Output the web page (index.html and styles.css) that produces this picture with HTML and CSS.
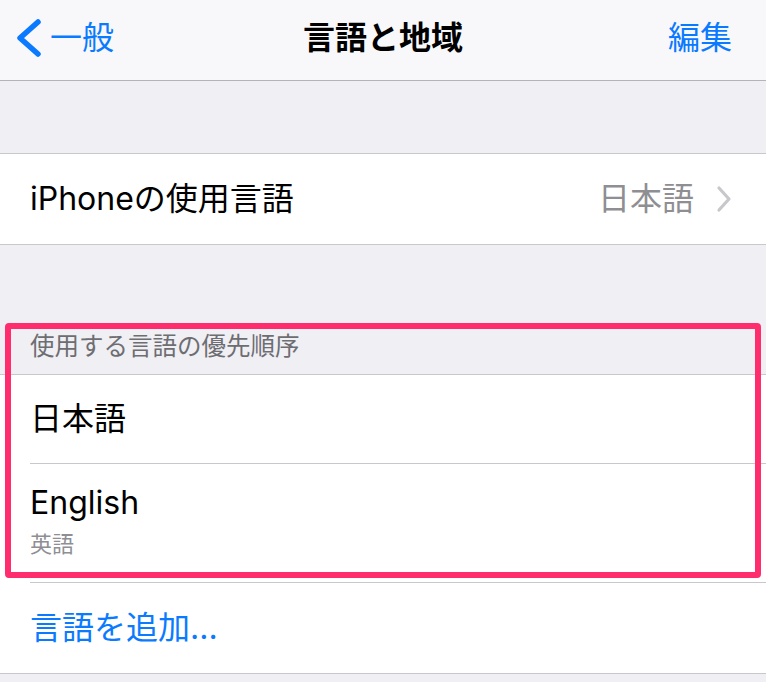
FILE: index.html
```html
<!DOCTYPE html>
<html lang="ja">

<head>
    <meta charset="UTF-8">
    <meta name="viewport" content="width=device-width, initial-scale=1.0">
    <title>言語と地域</title>
    <link rel="stylesheet" href="styles.css">
</head>

<body>
    <!-- ナビゲーションバー -->
    <div class="nav">
        <a class="back" href="javascript:;">
            <svg width="27" height="40" viewBox="0 0 27 40">
                <polyline points="23,4 5,20 23,36" fill="none" stroke="#0a7aff" stroke-width="5.5"
                    stroke-linecap="round" stroke-linejoin="round" />
            </svg>
            <span>一般</span>
        </a>
        <div class="title">言語と地域</div>
        <a class="edit" href="javascript:;">編集</a>
    </div>

    <div class="gap"></div>

    <div class="group">
        <div class="row">
            <span class="label">iPhoneの使用言語</span>
            <span class="value">日本語</span>
            <svg class="chev" width="16" height="28" viewBox="0 0 16 28">
                <polyline points="3,3 13,14 3,25" fill="none" stroke="#c7c7cc" stroke-width="3.2"
                    stroke-linecap="round" stroke-linejoin="round" />
            </svg>
        </div>
    </div>

    <div class="section">
        <div class="head">使用する言語の優先順序</div>
        <div class="group">
            <div class="row lang">日本語</div>
            <div class="row lang two">
                <div class="name">English</div>
                <div class="sub">英語</div>
            </div>
            <div class="row add">言語を追加...</div>
        </div>
        <!-- 赤い枠 -->
        <div class="mark"></div>
    </div>
</body>

</html>
```

FILE: styles.css
```css
html,
body {
    margin: 0;
    padding: 0;
}

body {
    width: 766px;
    height: 682px;
    overflow: hidden;
    background-color: #efeff4;
    font-family: Inter, "Noto Sans CJK JP", sans-serif;
    color: #000;
}

a {
    text-decoration: none;
    color: #0a7aff;
}

.nav {
    display: grid;
    grid-template-columns: 1fr auto 1fr;
    align-items: center;
    height: 80px;
    background-color: #f8f8fa;
    border-bottom: 1px solid #b4b4b8;
    font-size: 32px;
    line-height: 40px;
}

.back {
    display: flex;
    align-items: center;
    padding-left: 15px;
    padding-bottom: 5px;
}

.back svg {
    margin-right: 8px;
}

.title {
    font-weight: bold;
    padding-bottom: 5px;
}

.edit {
    justify-self: end;
    padding-right: 34px;
    padding-bottom: 5px;
}

.gap {
    height: 72px;
}

.group {
    background-color: #fff;
    border-top: 1px solid #c8c7cc;
    border-bottom: 1px solid #c8c7cc;
}

.row {
    display: flex;
    align-items: center;
    height: 90px;
    padding-left: 30px;
    font-size: 32px;
    line-height: 40px;
}

.label {
    flex: 1;
}

.value {
    color: #8e8e93;
    margin-right: 22px;
}

.chev {
    margin-right: 34px;
}

.section {
    position: relative;
}

.head {
    height: 129px;
    box-sizing: border-box;
    padding: 86px 0 0 30px;
    font-size: 24.5px;
    line-height: 30px;
    color: #6d6d72;
}

.group .lang {
    height: 88px;
    padding-left: 0;
    margin-left: 30px;
    border-bottom: 1px solid #c8c7cc;
}

.group .two {
    height: 118px;
    flex-direction: column;
    align-items: flex-start;
    justify-content: flex-start;
}

.name {
    margin-top: 19px;
}

.sub {
    margin-top: 6px;
    font-size: 22px;
    line-height: 30px;
    color: #8e8e93;
}

.add {
    color: #0a7aff;
}

/* 画像に重ねた枠 */
.mark {
    position: absolute;
    left: 5px;
    top: 78px;
    width: 744px;
    height: 243px;
    border: 6px solid #ff2d6e;
    border-radius: 4px;
}
```
